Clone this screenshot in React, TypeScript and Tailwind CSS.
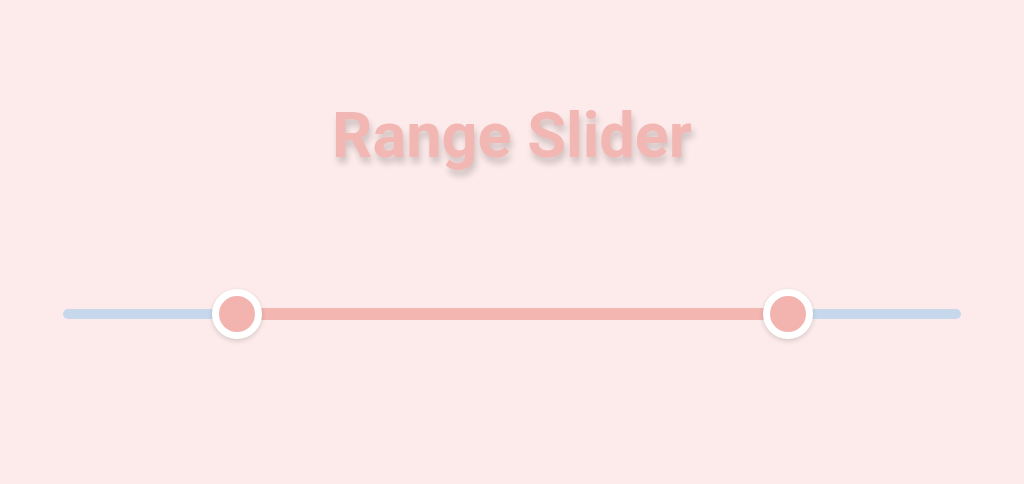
import { useState } from "react";

const MIN = 0;
const MAX = 100;

export default function App() {
  const [range] = useState<[number, number]>([19.4, 80.7]);
  const pct = (v: number) => ((v - MIN) / (MAX - MIN)) * 100;

  return (
    <div className="flex h-[484px] w-full flex-col items-center bg-[#fdebeb] font-['Roboto',sans-serif]">
      <h1 className="mt-[98px] text-[63px] font-bold leading-[76px] text-[#f3b7b3] [text-shadow:2px_6px_6px_rgba(0,0,0,0.18)]">
        Range Slider
      </h1>

      <div className="mt-[127px] w-full px-[63px]">
        <div className="relative h-[26px]">
          {/* base track */}
          <div className="absolute inset-x-0 top-[8px] h-[10px] rounded-full bg-[#c8d8ec]" />
          {/* selected segment */}
          <div
            className="absolute top-[7px] h-[12px] bg-[#f3b6b1]"
            style={{ left: `${pct(range[0])}%`, width: `${pct(range[1]) - pct(range[0])}%` }}
          />
          {range.map((v, i) => (
            <div
              key={i}
              className="absolute top-[-12px] h-[50px] w-[50px] -translate-x-1/2 rounded-full border-[7px] border-white bg-[#f3b3ae] shadow-[0_2px_5px_rgba(0,0,0,0.15)]"
              style={{ left: `${pct(v)}%` }}
            />
          ))}
        </div>
      </div>
    </div>
  );
}
